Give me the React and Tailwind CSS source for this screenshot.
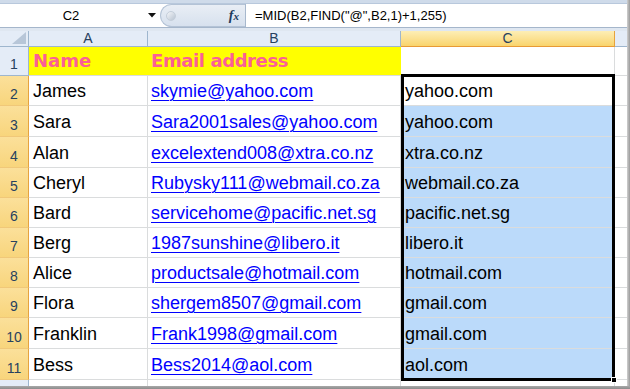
import React from "react";

const data = [
  ["James", "skymie@yahoo.com", "yahoo.com"],
  ["Sara", "Sara2001sales@yahoo.com", "yahoo.com"],
  ["Alan", "excelextend008@xtra.co.nz", "xtra.co.nz"],
  ["Cheryl", "Rubysky111@webmail.co.za", "webmail.co.za"],
  ["Bard", "servicehome@pacific.net.sg", "pacific.net.sg"],
  ["Berg", "1987sunshine@libero.it", "libero.it"],
  ["Alice", "productsale@hotmail.com", "hotmail.com"],
  ["Flora", "shergem8507@gmail.com", "gmail.com"],
  ["Franklin", "Frank1998@gmail.com", "gmail.com"],
  ["Bess", "Bess2014@aol.com", "aol.com"],
];

const cell = "border-r border-b border-[#dadcdd] flex items-end overflow-hidden whitespace-nowrap";
const txt = "text-[18px] leading-[20px] text-black [font-family:'Liberation_Sans',Arial,sans-serif]";

function RowHeader({ n, hl }) {
  return (
    <div
      className={
        hl
          ? "flex items-end justify-center pb-[3px] border-r border-b border-r-[#e6a33e] border-b-[#f0c879] bg-gradient-to-b from-[#fbe09a] to-[#f8d57c] text-[14px] leading-[15px] text-[#27415f] [font-family:'Liberation_Sans',Arial,sans-serif]"
          : "flex items-end justify-center pb-[3px] border-r border-b border-[#9eb6ce] bg-[#e4ecf7] text-[14px] leading-[15px] text-[#27415f] [font-family:'Liberation_Sans',Arial,sans-serif]"
      }
    >
      {n}
    </div>
  );
}

export default function App() {
  return (
    <div className="w-[630px] h-[389px] overflow-hidden bg-white flex flex-col">
      <div className="flex flex-1 min-h-0">
        <div className="w-[627px] flex flex-col">
          {/* top strip */}
          <div className="h-[4px] bg-[#cfdbea] border-b border-[#b8c8dc]" />
          {/* formula bar */}
          <div className="h-[23px] flex bg-white">
            <div className="w-[142px] flex items-center justify-center text-[13px] text-black [font-family:'Liberation_Sans',Arial,sans-serif]">
              C2
            </div>
            <div className="w-[18px] flex items-center">
              <svg width="8" height="5" viewBox="0 0 8 5" className="ml-[6px]">
                <polygon points="0,0 8,0 4,4.5" fill="#111" />
              </svg>
            </div>
            <div className="w-[85px] relative flex items-center justify-end pr-[6px] bg-gradient-to-b from-[#e9eef5] to-[#d7e1ee] rounded-l-[12px] border-l border-t border-b border-[#b4c3d6]">
              <div className="absolute left-[5px] top-[6px] w-[10px] h-[10px] rounded-full bg-gradient-to-br from-[#f4f6f9] to-[#b9c4d2] border border-[#c4ceda]" />
              <span className="italic font-bold text-[14px] text-[#1f3b5c] [font-family:'Liberation_Serif',serif]">
                f<span className="text-[11px]">x</span>
              </span>
            </div>
            <div className="w-[1px] bg-[#a7b8cd]" />
            <div className="flex-1 flex items-center pl-[9px] text-[13px] text-black [font-family:'Liberation_Sans',Arial,sans-serif]">
              =MID(B2,FIND("@",B2,1)+1,255)
            </div>
          </div>
          <div className="h-[1px] bg-[#a5b6cb]" />
          <div className="h-[3px] bg-[#dfe7f1]" />
          {/* grid */}
          <div className="relative flex-1 min-h-0">
            <div className="grid grid-cols-[29px_119px_253px_214px_12px] grid-rows-[16px_29px_30px_31px_31px_30px_30px_30px_30px_30px_31px_31px_6px]">
              {/* header row */}
              <div className="relative border-r border-b border-[#9eb6ce] bg-[#e4ecf7]">
                <svg width="14" height="12" viewBox="0 0 14 12" className="absolute right-[2px] bottom-[2px]">
                  <polygon points="14,0 14,12 0,12" fill="#b7c6d8" />
                </svg>
              </div>
              <div className="flex items-center justify-center border-r border-b border-[#9eb6ce] bg-[#e4ecf7] text-[14px] text-[#27415f] [font-family:'Liberation_Sans',Arial,sans-serif]">A</div>
              <div className="flex items-center justify-center border-r border-b border-[#9eb6ce] bg-[#e4ecf7] text-[14px] text-[#27415f] [font-family:'Liberation_Sans',Arial,sans-serif]">B</div>
              <div className="flex items-center justify-center border-r border-b border-r-[#e6a33e] border-b-[#e89a35] bg-gradient-to-b from-[#fdeeb5] to-[#f9d46b] text-[14px] text-[#27415f] [font-family:'Liberation_Sans',Arial,sans-serif]">C</div>
              <div className="border-b border-[#9eb6ce] bg-[#e4ecf7]" />

              {/* row 1 */}
              <RowHeader n={1} hl={false} />
              <div className="border-b border-[#dadcdd] bg-[#ffff00] flex items-end pl-[4px] pb-[4px] overflow-hidden whitespace-nowrap">
                <span className="text-[18px] leading-[20px] font-bold text-[#fb5f97] [font-family:'DejaVu_Sans',Verdana,sans-serif]">Name</span>
              </div>
              <div className="border-b border-[#dadcdd] bg-[#ffff00] flex items-end pl-[3px] pb-[4px] overflow-hidden whitespace-nowrap">
                <span className="text-[18px] leading-[20px] font-bold tracking-[-0.4px] text-[#fb5f97] [font-family:'DejaVu_Sans',Verdana,sans-serif]">Email address</span>
              </div>
              <div className={cell} />
              <div className="border-b border-[#dadcdd]" />

              {data.map((r, i) => (
                <React.Fragment key={i}>
                  <RowHeader n={i + 2} hl={true} />
                  <div className={cell + " pl-[4px] pb-[4px]"}>
                    <span className={txt}>{r[0]}</span>
                  </div>
                  <div className={cell + " pl-[3px] pb-[4px]"}>
                    <span className="text-[18px] leading-[20px] text-[#0000ff] underline underline-offset-[3px] decoration-1 [font-family:'Liberation_Sans',Arial,sans-serif]">
                      {r[1]}
                    </span>
                  </div>
                  <div className={i === 0 ? cell + " pl-[4px] pb-[4px]" : cell + " pl-[4px] pb-[4px] bg-[#bbdafa]"}>
                    <span className={txt}>{r[2]}</span>
                  </div>
                  <div className="border-b border-[#dadcdd]" />
                </React.Fragment>
              ))}

              {/* row 12 partial */}
              <div className="border-r border-[#9eb6ce] bg-[#e4ecf7]" />
              <div className="border-r border-[#dadcdd]" />
              <div className="border-r border-[#dadcdd]" />
              <div className="border-r border-[#dadcdd]" />
              <div />
            </div>

            {/* selection border */}
            <div className="absolute left-[401px] top-[43px] w-[214px] h-[307px] border-[3px] border-black pointer-events-none" />
            <div className="absolute left-[611px] top-[346px] w-[6px] h-[6px] bg-black border border-white pointer-events-none" />
          </div>
        </div>
        <div className="w-[3px] bg-gradient-to-r from-[#d0d0d0] to-[#9a9a9a]" />
      </div>
      <div className="h-[3px] bg-gradient-to-b from-[#a8a8a8] to-[#8c8c8c]" />
    </div>
  );
}
